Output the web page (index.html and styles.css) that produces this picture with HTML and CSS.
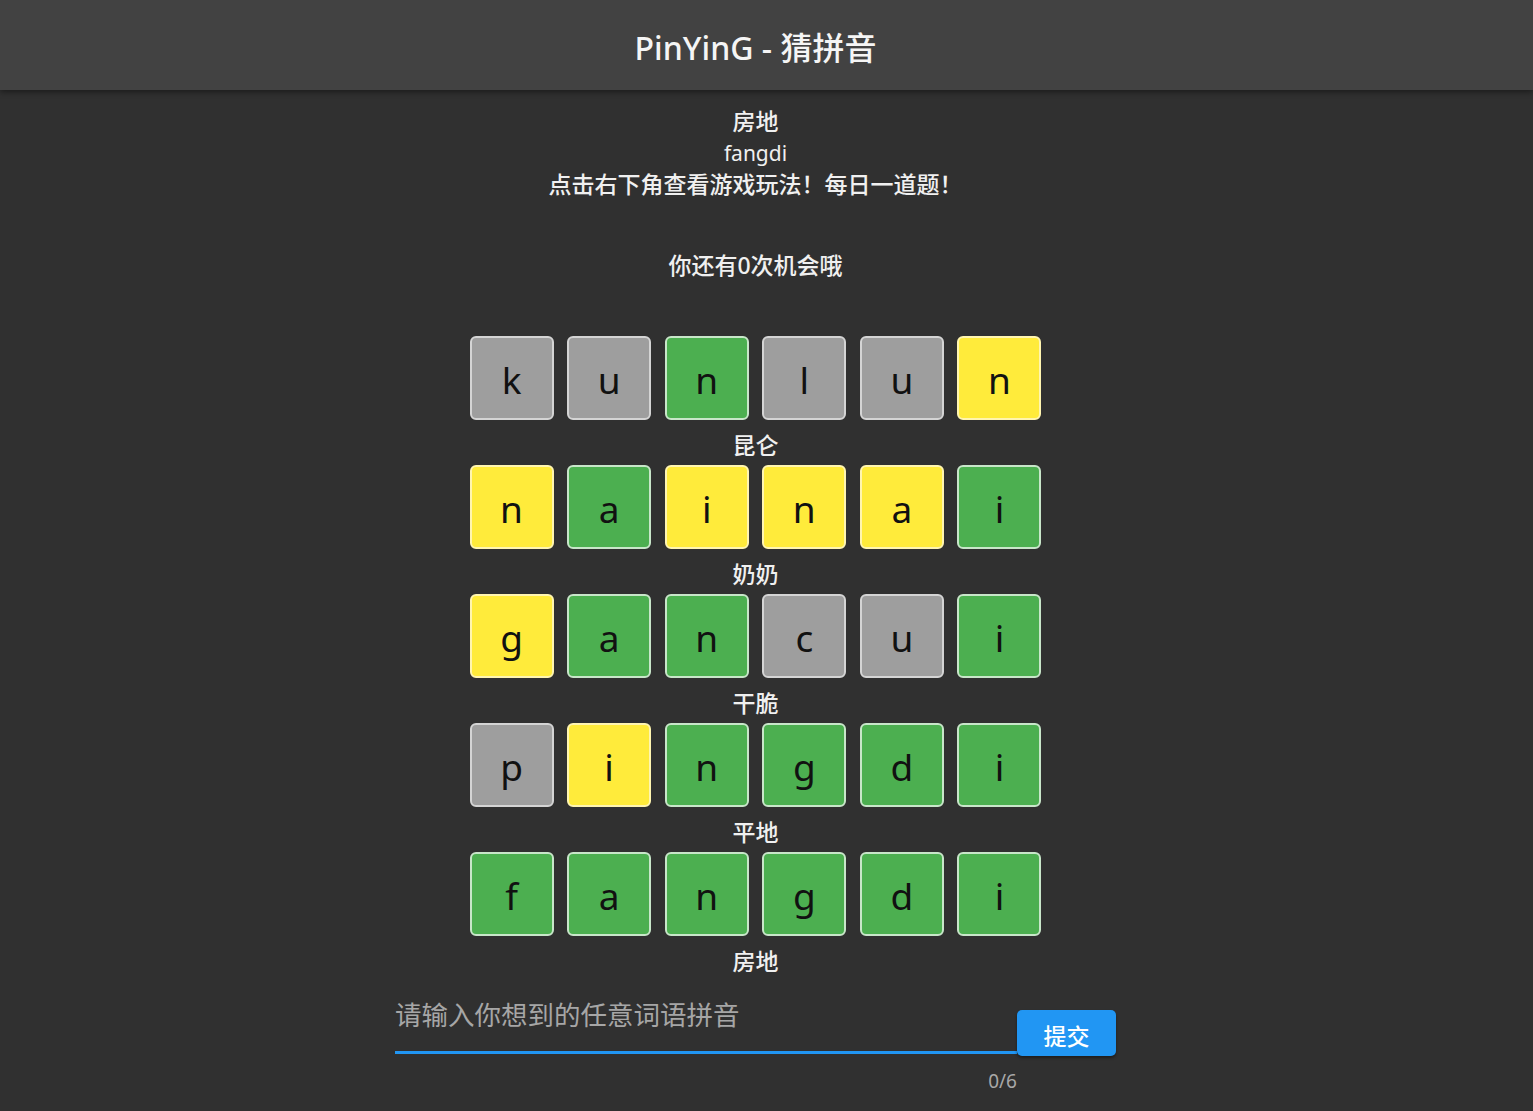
FILE: index.html
```html
<!DOCTYPE html>
<html lang="zh">
<head>
<meta charset="utf-8">
<title>PinYinG - 猜拼音</title>
<link rel="stylesheet" href="styles.css">
</head>
<body>
<header class="topbar"><div class="title">PinYinG - 猜拼音</div></header>
<main class="main">
  <div class="intro">
    <div class="line strong">房地</div>
    <div class="line latin">fangdi</div>
    <div class="line strong">点击右下角查看游戏玩法！每日一道题！</div>
  </div>
  <div class="chances">你还有0次机会哦</div>
  <div class="board">
    <div class="row">
      <div class="tile gray">k</div><div class="tile gray">u</div><div class="tile green">n</div><div class="tile gray">l</div><div class="tile gray">u</div><div class="tile yellow">n</div>
    </div>
    <div class="word">昆仑</div>
    <div class="row">
      <div class="tile yellow">n</div><div class="tile green">a</div><div class="tile yellow">i</div><div class="tile yellow">n</div><div class="tile yellow">a</div><div class="tile green">i</div>
    </div>
    <div class="word">奶奶</div>
    <div class="row">
      <div class="tile yellow">g</div><div class="tile green">a</div><div class="tile green">n</div><div class="tile gray">c</div><div class="tile gray">u</div><div class="tile green">i</div>
    </div>
    <div class="word">干脆</div>
    <div class="row">
      <div class="tile gray">p</div><div class="tile yellow">i</div><div class="tile green">n</div><div class="tile green">g</div><div class="tile green">d</div><div class="tile green">i</div>
    </div>
    <div class="word">平地</div>
    <div class="row">
      <div class="tile green">f</div><div class="tile green">a</div><div class="tile green">n</div><div class="tile green">g</div><div class="tile green">d</div><div class="tile green">i</div>
    </div>
    <div class="word">房地</div>
  </div>
  <div class="form">
    <div class="field">
      <div class="input"><span class="placeholder">请输入你想到的任意词语拼音</span></div>
      <div class="counter">0/6</div>
    </div>
    <button class="submit">提交</button>
  </div>
</main>
</body>
</html>
```
FILE: styles.css
```css
html, body {
  margin: 0;
  padding: 0;
  background: #303030;
  height: 100%;
  overflow: hidden;
}
body {
  font-family: "Noto Sans", "Noto Sans CJK SC", sans-serif;
  color: #ffffff;
}
.topbar {
  height: 90px;
  background: #424242;
  box-shadow: 0 2px 6px rgba(0,0,0,0.45);
  display: flex;
  align-items: center;
  justify-content: center;
  padding-right: 22px;
  position: relative;
}
.title {
  font-size: 32px;
  font-weight: 500;
  color: #f5f5f5;
  padding-top: 2px;
}
.main {
  padding-right: 22px;
  display: flex;
  flex-direction: column;
  align-items: center;
}
.intro {
  padding-top: 16px;
  text-align: center;
}
.line {
  font-size: 23px;
  line-height: 31.5px;
  color: #f0f0f0;
}
.line.latin { font-size: 21px; }
.line.strong { font-weight: 500; }
.chances {
  margin-top: 48px;
  font-size: 23px;
  line-height: 32px;
  font-weight: 500;
  color: #f0f0f0;
}
.board {
  margin-top: 55px;
  display: flex;
  flex-direction: column;
  align-items: center;
}
.row {
  display: flex;
  gap: 13.6px;
}
.tile {
  width: 80px;
  height: 76px;
  padding-top: 4px;
  border: 2px solid #d7d7d7;
  border-radius: 6px;
  display: flex;
  align-items: center;
  justify-content: center;
  font-size: 37px;
  color: #111;
  box-sizing: content-box;
}
.tile.gray { background: #9e9e9e; border-color: #d4d4d4; }
.tile.green { background: #4caf50; border-color: #c8e6c9; }
.tile.yellow { background: #ffeb3b; border-color: #fff5b0; }
.word {
  height: 45px;
  line-height: 50px;
  font-size: 23px;
  font-weight: 500;
  color: #f0f0f0;
}
.form {
  margin-top: 11px;
  display: flex;
  align-items: flex-start;
  width: 721px;
}
.field {
  flex: 1;
  display: flex;
  flex-direction: column;
}
.input {
  height: 59px;
  border-bottom: 3px solid #2196f3;
  display: flex;
  align-items: flex-start;
}
.placeholder {
  font-size: 26.5px;
  line-height: 46px;
  color: #a6a6a6;
}
.counter {
  align-self: flex-end;
  font-size: 19px;
  line-height: 24px;
  margin-top: 15px;
  color: #a8a8a8;
}
.submit {
  margin-top: 18px;
  width: 99px;
  height: 46px;
  background: #2196f3;
  border: none;
  border-radius: 5px;
  color: #fff;
  font-family: "Noto Sans CJK SC", sans-serif;
  font-size: 23px;
  font-weight: 500;
  box-shadow: 0 2px 3px rgba(0,0,0,0.4);
  padding: 4px 0 0 0;
}
```
